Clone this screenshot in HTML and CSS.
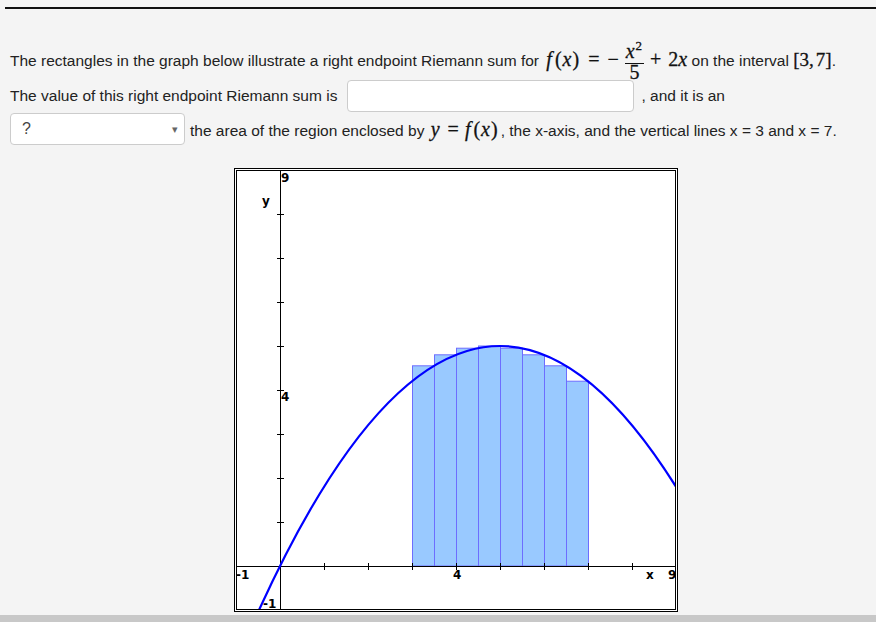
FILE: index.html
```html
<!DOCTYPE html>
<html>
<head>
<meta charset="utf-8">
<title>Riemann sum</title>
<link rel="stylesheet" href="styles.css">
</head>
<body>
<div class="rule"></div>
<div class="content">
  <p class="row1">The rectangles in the graph below illustrate a right endpoint Riemann sum for <span class="math m1"><span class="mi f">f</span><span class="mo">(</span><span class="mi arg">x</span><span class="mo">)</span><span class="rel">=</span><span class="neg">−</span><span class="frac"><span class="num"><span class="mi">x</span><span class="sup">2</span></span><span class="den">5</span></span><span class="bin">+</span><span class="mn">2</span><span class="mi">x</span></span> on the interval <span class="math m2"><span class="mo">[</span><span class="mn">3</span><span class="mo comma">,</span><span class="mn">7</span><span class="mo">]</span></span>.</p>
  <div class="row2">
    <span class="lead">The value of this right endpoint Riemann sum is</span>
    <input class="answer" type="text" aria-label="Riemann sum value">
    <span class="tail">, and it is an</span>
  </div>
  <div class="row3">
    <div class="select"><span class="qmark">?</span><span class="caret">▾</span></div>
    <span class="txt">the area of the region enclosed by <span class="math m3"><span class="mi">y</span><span class="rel">=</span><span class="mi f">f</span><span class="mo">(</span><span class="mi arg">x</span><span class="mo">)</span></span>, the x-axis, and the vertical lines x = 3 and x = 7.</span>
  </div>
  <svg class="graph" width="444" height="444" viewBox="234 168 444 444" xmlns="http://www.w3.org/2000/svg">
    <defs>
      <clipPath id="plot"><rect x="237" y="171" width="438" height="438"/></clipPath>
    </defs>
    <rect x="234.5" y="168.5" width="443" height="443" fill="#fff" stroke="#000"/>
    <rect x="236.5" y="170.5" width="439" height="439" fill="#fff" stroke="#000"/>
    <g clip-path="url(#plot)">
      <g fill="#99c9ff" stroke="#6d6dff" stroke-width="1">
        <rect x="412.5" y="365.8" width="22" height="200.2"/>
        <rect x="434.5" y="354.8" width="22" height="211.2"/>
        <rect x="456.5" y="348.2" width="22" height="217.8"/>
        <rect x="478.5" y="346" width="22" height="220"/>
        <rect x="500.5" y="348.2" width="22" height="217.8"/>
        <rect x="522.5" y="354.8" width="22" height="211.2"/>
        <rect x="544.5" y="365.8" width="22" height="200.2"/>
        <rect x="566.5" y="381.2" width="22" height="184.8"/>
      </g>
      <g stroke="#000" stroke-width="1">
        <line x1="237" y1="566.5" x2="675" y2="566.5"/>
        <line x1="280.5" y1="171" x2="280.5" y2="609"/>
        <line x1="324.5" y1="563" x2="324.5" y2="570"/>
        <line x1="368.5" y1="563" x2="368.5" y2="570"/>
        <line x1="412.5" y1="563" x2="412.5" y2="570"/>
        <line x1="456.5" y1="563" x2="456.5" y2="570"/>
        <line x1="500.5" y1="563" x2="500.5" y2="570"/>
        <line x1="544.5" y1="563" x2="544.5" y2="570"/>
        <line x1="588.5" y1="563" x2="588.5" y2="570"/>
        <line x1="632.5" y1="563" x2="632.5" y2="570"/>
        <line x1="277" y1="522.5" x2="284" y2="522.5"/>
        <line x1="277" y1="478.5" x2="284" y2="478.5"/>
        <line x1="277" y1="434.5" x2="284" y2="434.5"/>
        <line x1="277" y1="390.5" x2="284" y2="390.5"/>
        <line x1="277" y1="346.5" x2="284" y2="346.5"/>
        <line x1="277" y1="302.5" x2="284" y2="302.5"/>
        <line x1="277" y1="258.5" x2="284" y2="258.5"/>
        <line x1="277" y1="214.5" x2="284" y2="214.5"/>
      </g>
      <path d="M253.6,621.97 Q467,143.95 680.4,493.9" fill="none" stroke="#0000ff" stroke-width="2.2"/>
    </g>
    <g class="lbl">
      <text x="281" y="182">9</text>
      <text x="262" y="205">y</text>
      <text x="281" y="401">4</text>
      <text x="236" y="579">-1</text>
      <text x="453" y="579">4</text>
      <text x="646" y="579">x</text>
      <text x="668" y="579">9</text>
      <text x="263" y="608">-1</text>
    </g>
  </svg>
</div>
<div class="bottombar"></div>
</body>
</html>
```

FILE: styles.css
```css
html, body {
  margin: 0;
  padding: 0;
  overflow: hidden;
}
body {
  background: #f4f4f4;
  font-family: "Liberation Sans", Arial, sans-serif;
  font-size: 15.5px;
  color: #222;
}
.rule {
  margin: 7px 0 0 5px;
  border-top: 2px solid #111;
}
.content {
  padding: 0 10px;
}
.row1 {
  margin: 0;
  box-sizing: border-box;
  height: 71px;
  padding-top: 31px;
  line-height: 20px;
  white-space: nowrap;
}
.math {
  font-family: "Liberation Serif", "Times New Roman", serif;
  font-size: 20px;
  color: #111;
  -webkit-text-stroke: 0.3px #111;
}
.m1 {
  margin-left: 3px;
}
.mi {
  font-style: italic;
}
.f {
  padding-right: 3px;
}
.arg {
  margin: 0 1px;
}
.mo, .mn {
  font-style: normal;
}
.m1 .rel {
  margin: 0 8px 0 9px;
}
.neg {
  margin-right: 6px;
}
.bin {
  margin: 0 7px 0 6px;
}
.frac {
  display: inline-flex;
  flex-direction: column;
  align-items: center;
  vertical-align: 7.5px;
}
.num {
  line-height: 22.5px;
  padding: 0 2px 0 1px;
}
.sup {
  font-size: 13px;
  font-style: normal;
  vertical-align: 8px;
  line-height: 0;
  margin-left: 1px;
}
.den {
  align-self: stretch;
  text-align: center;
  border-top: 1px solid #111;
  line-height: 16px;
}
.m2 {
  font-size: 19px;
}
.comma {
  margin-right: 2px;
}
.row2 {
  display: flex;
  align-items: center;
  height: 32px;
  white-space: nowrap;
}
.answer {
  box-sizing: border-box;
  width: 287px;
  height: 32px;
  margin: 0 7px 0 10px;
  padding: 0 8px;
  border: 1px solid #cccccc;
  border-radius: 4px;
  background: #fff;
  font: inherit;
}
.row3 {
  display: flex;
  align-items: center;
  height: 32px;
  margin-top: 1px;
  white-space: nowrap;
}
.select {
  box-sizing: border-box;
  width: 175px;
  height: 32px;
  display: flex;
  align-items: center;
  justify-content: space-between;
  padding: 0 6px 0 11px;
  border: 1px solid #cccccc;
  border-radius: 4px;
  background: #fff;
  margin-right: 5px;
}
.qmark {
  color: #444;
  font-size: 16px;
}
.caret {
  color: #666;
  font-size: 11px;
}
.m3 {
  margin: 0 3px 0 2px;
}
.m3 .rel {
  margin: 0 6px 0 8px;
}
.graph {
  display: block;
  margin: 23px 0 0 224px;
}
.lbl text {
  font-family: "DejaVu Sans", sans-serif;
  font-weight: bold;
  font-size: 12px;
  fill: #000;
}
.bottombar {
  margin-top: 3px;
  height: 7px;
  background: #c8c8c8;
}
```
